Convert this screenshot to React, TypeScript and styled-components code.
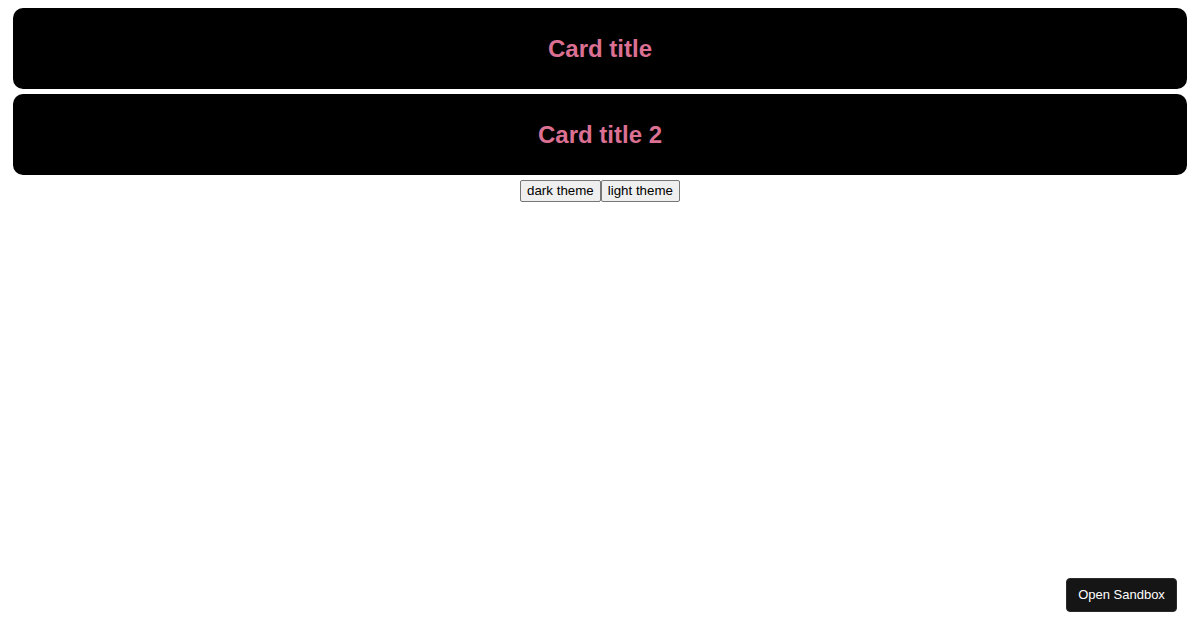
import React from "react";
import styled, { createGlobalStyle } from "styled-components";

const Global = createGlobalStyle`
  html, body { background: #ffffff; }
  body { margin: 8px; font-family: "Liberation Sans", Arial, sans-serif; }
`;

const Card = styled.div`
  margin: 5px;
  height: 81px;
  background: #000000;
  border-radius: 10px;
  display: flex;
  align-items: center;
  justify-content: center;
  &:first-of-type { margin-top: 0; }
`;

const Title = styled.h2`
  margin: 0;
  font-family: "Liberation Sans", Arial, sans-serif;
  font-size: 24px;
  font-weight: 700;
  color: #db7093;
`;

const Toolbar = styled.div`
  display: flex;
  justify-content: center;
  margin-top: 5px;
`;

const ThemeButton = styled.button`
  font-family: "Liberation Sans", Arial, sans-serif;
  font-size: 13.33px;
  line-height: 18px;
  height: 22px;
  padding: 0 6px 1px;
  color: #000000;
  background: #efefef;
  border: 1px solid #767676;
  border-radius: 2px;
  margin: 0;
`;

const SandboxButton = styled.button`
  position: fixed;
  right: 23px;
  bottom: 18px;
  width: 111px;
  height: 34px;
  padding: 0 0 2px;
  background: #151515;
  color: #ffffff;
  border: 1px solid #2a2a2a;
  border-radius: 4px;
  font-family: "Liberation Sans", Arial, sans-serif;
  font-size: 13px;
`;

export default function App() {
  return (
    <>
      <Global />
      <Card>
        <Title>Card title</Title>
      </Card>
      <Card>
        <Title>Card title 2</Title>
      </Card>
      <Toolbar>
        <ThemeButton>dark theme</ThemeButton>
        <ThemeButton>light theme</ThemeButton>
      </Toolbar>
      <SandboxButton>Open Sandbox</SandboxButton>
    </>
  );
}
